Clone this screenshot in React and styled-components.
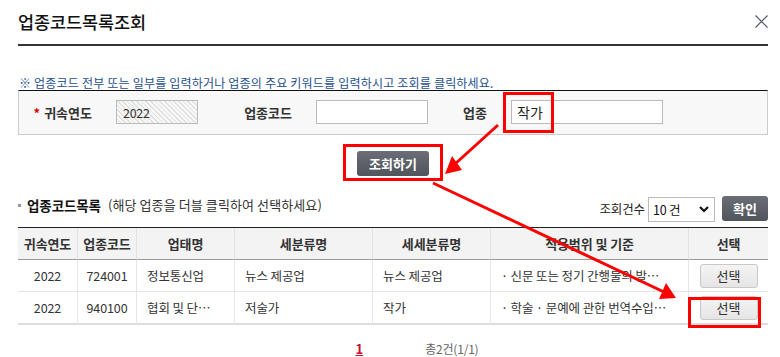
import React from 'react';
import styled, { createGlobalStyle } from 'styled-components';

const GlobalStyle = createGlobalStyle`
  html, body { margin: 0; padding: 0; background: #fff; }
  body { font-family: "Noto Sans CJK KR", "Noto Sans", sans-serif; color: #333; }
  * { box-sizing: border-box; }
`;

const Page = styled.div`
  position: relative;
  width: 780px;
  height: 357px;
  padding: 0 12px 0 18px;
  overflow: hidden;
`;

const Header = styled.header`
  height: 46px;
  display: flex;
  align-items: center;
  justify-content: space-between;
  border-bottom: 2px solid #333;
`;

const Title = styled.h1`
  margin: 0;
  font-size: 17.5px;
  font-weight: 500;
  line-height: 20px;
  color: #111;
  letter-spacing: -0.1px;
`;

const CloseButton = styled.button`
  display: flex;
  width: 13px;
  height: 13px;
  padding: 0;
  margin: 0 0 2px 0;
  border: 0;
  background: none;
`;

const Notice = styled.p`
  margin: 29px 0 0;
  height: 15px;
  line-height: 15px;
  font-size: 12px;
  color: #1c4f8f;
  letter-spacing: 0.2px;
  white-space: nowrap;
  padding-left: 1px;
`;

const SearchBox = styled.div`
  display: flex;
  align-items: center;
  height: 45px;
  padding: 9px 0 10px;
  background: #f8f8f8;
  border: 1px solid #ccc;
  border-top-color: #111;
`;

const FieldLabel = styled.label`
  width: ${p => p.$w}px;
  padding-right: 24px;
  text-align: right;
  font-size: 13px;
  font-weight: 700;
  color: #333;
  letter-spacing: 0;
  white-space: nowrap;
`;

const Required = styled.span`
  color: #d00;
  font-weight: 700;
  margin-right: 4px;
`;

const TextInput = styled.input`
  width: ${p => p.$w}px;
  height: 24px;
  border: 1px solid #bbb;
  background: #fff;
  padding: 0 5px;
  font-family: inherit;
  font-size: ${p => p.$size || 13}px;
  color: #222;
  outline: none;
`;

const ReadonlyField = styled.div`
  display: flex;
  align-items: center;
  width: ${p => p.$w}px;
  height: 24px;
  border: 1px solid #bbb;
  padding: 0 6px;
  font-size: 12.5px;
  color: #333;
  letter-spacing: -0.3px;
  background-color: #f7f7f7;
  background-image: repeating-linear-gradient(45deg,
    #f7f7f7 0px, #f7f7f7 2.2px, #e1e1e1 2.2px, #e1e1e1 3.3px);
`;

const ButtonRow = styled.div`
  display: flex;
  justify-content: center;
  margin-top: 16px;
`;

const DarkButton = styled.button`
  width: ${p => p.$w}px;
  height: 25px;
  border: 0;
  border-radius: 3px;
  background: linear-gradient(#6b6e76, #50545b);
  color: #fff;
  font-family: inherit;
  font-size: 13px;
  font-weight: 700;
  letter-spacing: 0;
  padding: 0;
`;

const ListBar = styled.div`
  display: flex;
  align-items: center;
  justify-content: space-between;
  height: 25px;
  margin-top: 20px;
`;

const ListTitle = styled.h2`
  margin: 0;
  align-self: flex-start;
  display: flex;
  align-items: center;
  font-size: 13.5px;
  line-height: 18px;
  font-weight: 700;
  color: #111;
  letter-spacing: -0.1px;
  &::before {
    content: "";
    width: 3px;
    height: 3px;
    background: #999;
    margin-right: 6px;
  }
`;

const Hint = styled.span`
  font-size: 13px;
  font-weight: 400;
  color: #333;
  margin-left: 7px;
  letter-spacing: 0.1px;
`;

const Controls = styled.div`
  display: flex;
  align-items: center;
`;

const ControlLabel = styled.span`
  font-size: 12.5px;
  color: #222;
  letter-spacing: -0.1px;
  margin-right: 3px;
`;

const SelectWrap = styled.div`
  position: relative;
  width: 67px;
  height: 25px;
  margin-right: 7px;
`;

const Select = styled.select`
  appearance: none;
  width: 100%;
  height: 100%;
  border: 1px solid #bbb;
  background: #fff;
  padding: 0 0 0 4px;
  font-family: inherit;
  font-size: 12.5px;
  color: #111;
  letter-spacing: -0.2px;
  outline: none;
`;

const Chevron = styled.svg`
  position: absolute;
  right: 6px;
  top: 10px;
  pointer-events: none;
`;

const Table = styled.table`
  width: 100%;
  margin-top: 6px;
  border-collapse: separate;
  border-spacing: 0;
  table-layout: fixed;
  border-top: 1px solid #222;
`;

const Th = styled.th`
  height: 32px;
  padding: 0;
  background: #f3f3f3;
  border-bottom: 1px solid #9a9a9a;
  border-left: 1px solid #e2e2e2;
  &:first-child { border-left: 0; }
  font-size: 13px;
  font-weight: 700;
  color: #333;
  letter-spacing: -0.1px;
  text-align: center;
  white-space: nowrap;
`;

const Td = styled.td`
  height: 32px;
  padding: 0;
  padding-left: ${p => (p.$align === 'left' ? '10px' : '0')};
  border-bottom: 1px solid #e4e4e4;
  border-left: 1px solid #e6e6e6;
  &:first-child { border-left: 0; }
  tr:last-child & { border-bottom: 2px solid #ddd; height: 33px; }
  font-size: 12.5px;
  color: #333;
  letter-spacing: -0.1px;
  text-align: ${p => p.$align || 'center'};
  white-space: nowrap;
  overflow: hidden;
`;

const PickButton = styled.button`
  width: 58px;
  height: 24px;
  border: 1px solid #c8c8c8;
  border-radius: 3px;
  background: linear-gradient(#f4f4f4, #e5e5e5);
  font-family: inherit;
  font-size: 13px;
  color: #333;
  padding: 0;
  letter-spacing: 0;
`;

const Pager = styled.div`
  display: flex;
  justify-content: center;
  align-items: center;
  gap: 62px;
  margin-top: 14px;
  padding-left: 48px;
  line-height: 20px;
`;

const PageNum = styled.a`
  color: #c8102e;
  font-size: 13px;
  font-weight: 700;
  text-decoration: underline;
`;

const Total = styled.span`
  color: #666;
  font-size: 12px;
  letter-spacing: -0.2px;
`;

const Overlay = styled.svg`
  position: absolute;
  left: 0;
  top: 0;
  pointer-events: none;
`;

const columns = [59, 59, 98, 138, 118, 198, 80];
const headers = ['귀속연도', '업종코드', '업태명', '세분류명', '세세분류명', '적용범위 및 기준', '선택'];
const rows = [
  ['2022', '724001', '정보통신업', '뉴스 제공업', '뉴스 제공업', '· 신문 또는 정기 간행물의 발…'],
  ['2022', '940100', '협회 및 단…', '저술가', '작가', '· 학술 · 문예에 관한 번역수입…'],
];

export default function App() {
  return (
    <Page>
      <GlobalStyle />
      <Header>
        <Title>업종코드목록조회</Title>
        <CloseButton aria-label="닫기">
          <svg width="13" height="13" viewBox="0 0 13 13">
            <path d="M0.5 0.5 L12.5 12.5 M12.5 0.5 L0.5 12.5" stroke="#4b5070" strokeWidth="1.1" />
          </svg>
        </CloseButton>
      </Header>

      <Notice>※ 업종코드 전부 또는 일부를 입력하거나 업종의 주요 키워드를 입력하시고 조회를 클릭하세요.</Notice>

      <SearchBox>
        <FieldLabel $w={97}><Required>*</Required>귀속연도</FieldLabel>
        <ReadonlyField $w={82}>2022</ReadonlyField>
        <FieldLabel $w={118}>업종코드</FieldLabel>
        <TextInput $w={112} defaultValue="" />
        <FieldLabel $w={83}>업종</FieldLabel>
        <TextInput $w={152} $size={14} defaultValue="작가" />
      </SearchBox>

      <ButtonRow>
        <DarkButton $w={72}>조회하기</DarkButton>
      </ButtonRow>

      <ListBar>
        <ListTitle>업종코드목록<Hint>(해당 업종을 더블 클릭하여 선택하세요)</Hint></ListTitle>
        <Controls>
          <ControlLabel>조회건수</ControlLabel>
          <SelectWrap>
            <Select defaultValue="10">
              <option value="10">10 건</option>
              <option value="20">20 건</option>
            </Select>
            <Chevron width="10" height="7" viewBox="0 0 10 7">
              <path d="M1 1 L5 5 L9 1" fill="none" stroke="#111" strokeWidth="2.2" />
            </Chevron>
          </SelectWrap>
          <DarkButton $w={46}>확인</DarkButton>
        </Controls>
      </ListBar>

      <Table>
        <colgroup>
          {columns.map((w, i) => <col key={i} style={{ width: w }} />)}
        </colgroup>
        <thead>
          <tr>{headers.map(h => <Th key={h}>{h}</Th>)}</tr>
        </thead>
        <tbody>
          {rows.map(r => (
            <tr key={r[1]}>
              <Td>{r[0]}</Td>
              <Td>{r[1]}</Td>
              <Td $align="left">{r[2]}</Td>
              <Td $align="left">{r[3]}</Td>
              <Td $align="left">{r[4]}</Td>
              <Td $align="left">{' ' + r[5]}</Td>
              <Td><PickButton>선택</PickButton></Td>
            </tr>
          ))}
        </tbody>
      </Table>

      <Pager>
        <PageNum href="#">1</PageNum>
        <Total>총2건(1/1)</Total>
      </Pager>

      <Overlay width="780" height="357" viewBox="0 0 780 357">
        <g fill="none" stroke="#ff0000" strokeWidth="3">
          <rect x="504.5" y="93.5" width="48" height="38" />
          <rect x="344.5" y="145.5" width="97" height="34" />
          <rect x="689.5" y="298.5" width="70" height="28" />
          <line x1="498" y1="125" x2="455" y2="164" />
          <line x1="433" y1="183" x2="664" y2="292" />
        </g>
        <g fill="#ff0000">
          <polygon points="445,174 452,156 462,170" />
          <polygon points="676,298 659,299 666,283" />
        </g>
      </Overlay>
    </Page>
  );
}
